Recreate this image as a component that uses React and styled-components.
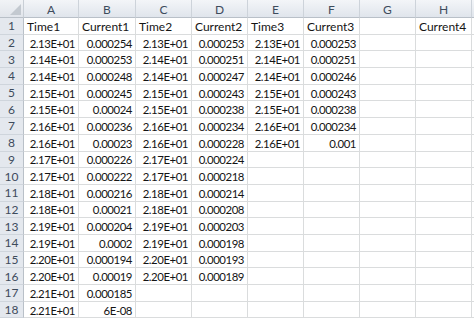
import React from "react";
import styled, { createGlobalStyle } from "styled-components";

const GlobalStyle = createGlobalStyle`
  html, body {
    margin: 0;
    padding: 0;
    background: #ffffff;
    overflow: hidden;
  }
`;

const columns = ["A", "B", "C", "D", "E", "F", "G", "H"];

const rows = [
  ["Time1", "Current1", "Time2", "Current2", "Time3", "Current3", "", "Current4"],
  ["2.13E+01", "0.000254", "2.13E+01", "0.000253", "2.13E+01", "0.000253"],
  ["2.14E+01", "0.000253", "2.14E+01", "0.000251", "2.14E+01", "0.000251"],
  ["2.14E+01", "0.000248", "2.14E+01", "0.000247", "2.14E+01", "0.000246"],
  ["2.15E+01", "0.000245", "2.15E+01", "0.000243", "2.15E+01", "0.000243"],
  ["2.15E+01", "0.00024", "2.15E+01", "0.000238", "2.15E+01", "0.000238"],
  ["2.16E+01", "0.000236", "2.16E+01", "0.000234", "2.16E+01", "0.000234"],
  ["2.16E+01", "0.00023", "2.16E+01", "0.000228", "2.16E+01", "0.001"],
  ["2.17E+01", "0.000226", "2.17E+01", "0.000224"],
  ["2.17E+01", "0.000222", "2.17E+01", "0.000218"],
  ["2.18E+01", "0.000216", "2.18E+01", "0.000214"],
  ["2.18E+01", "0.00021", "2.18E+01", "0.000208"],
  ["2.19E+01", "0.000204", "2.19E+01", "0.000203"],
  ["2.19E+01", "0.0002", "2.19E+01", "0.000198"],
  ["2.20E+01", "0.000194", "2.20E+01", "0.000193"],
  ["2.20E+01", "0.00019", "2.20E+01", "0.000189"],
  ["2.21E+01", "0.000185"],
  ["2.21E+01", "6E-08"],
];

const Sheet = styled.div`
  display: grid;
  grid-template-columns: 24px 55px 57px 56px 56px 56px 56px 56px 56px 1fr;
  grid-template-rows: 18px repeat(18, 16.7px);
  width: 474px;
  height: 319px;
  overflow: hidden;
  font-family: Lato, "Liberation Sans", sans-serif;
  color: #141414;
`;

const Corner = styled.div`
  position: relative;
  box-sizing: border-box;
  background: linear-gradient(#f1f3f6, #e1e5eb);
  border-right: 1px solid #c9cfd6;
  border-bottom: 1px solid #b9c0c8;
`;

const CornerMark = styled.svg`
  position: absolute;
  right: 2px;
  bottom: 2px;
`;

const ColHeader = styled.div`
  box-sizing: border-box;
  display: flex;
  align-items: center;
  justify-content: center;
  background: linear-gradient(#f3f5f8, #e0e5ec);
  border-right: 1px solid #cdd3da;
  border-bottom: 1px solid #b9c0c8;
  color: #3d4b5c;
  font-size: 12px;
  padding-top: 1px;
`;

const RowHeader = styled.div`
  box-sizing: border-box;
  display: flex;
  align-items: center;
  justify-content: center;
  background: #e4e8ee;
  border-right: 1px solid #b9c0c8;
  border-bottom: 1px solid #cfd5dc;
  color: #3d4b5c;
  font-size: 12px;
`;

const Cell = styled.div`
  box-sizing: border-box;
  display: flex;
  align-items: center;
  justify-content: ${(p) => (p.$numeric ? "flex-end" : "flex-start")};
  padding: 1px 3px 0 3px;
  border-right: 1px solid #dadcdd;
  border-bottom: 1px solid #dadcdd;
  white-space: nowrap;
  font-size: ${(p) => (p.$numeric ? "11.4px" : "12px")};
  letter-spacing: ${(p) => (p.$numeric ? "-0.45px" : "0")};
`;

const isNumeric = (v) => /^[0-9.E+-]+$/.test(v);

export default function App() {
  return (
    <>
      <GlobalStyle />
      <Sheet>
        <Corner>
          <CornerMark width="11" height="11" viewBox="0 0 11 11">
            <polygon points="11,0 11,11 0,11" fill="#c3c9d0" />
          </CornerMark>
        </Corner>
        {columns.map((c) => (
          <ColHeader key={c}>{c}</ColHeader>
        ))}
        <ColHeader />
        {rows.map((r, i) => (
          <React.Fragment key={i}>
            <RowHeader>{i + 1}</RowHeader>
            {columns.map((c, j) => {
              const v = r[j] || "";
              return (
                <Cell key={c} $numeric={isNumeric(v)}>
                  {v}
                </Cell>
              );
            })}
            <Cell />
          </React.Fragment>
        ))}
      </Sheet>
    </>
  );
}
